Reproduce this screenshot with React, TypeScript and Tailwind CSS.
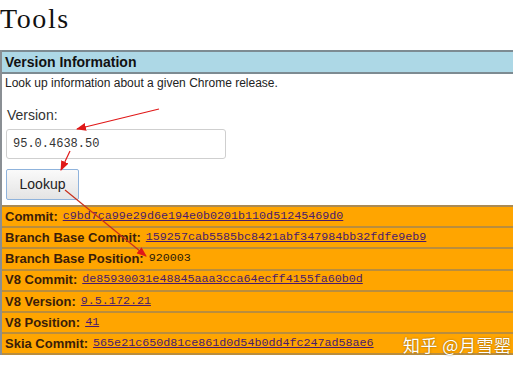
import React from "react";

const rows: { label: string; value: string; link: boolean }[] = [
  { label: "Commit:", value: "c9bd7ca99e29d6e194e0b0201b110d51245469d0", link: true },
  { label: "Branch Base Commit:", value: "159257cab5585bc8421abf347984bb32fdfe9eb9", link: true },
  { label: "Branch Base Position:", value: "920003", link: false },
  { label: "V8 Commit:", value: "de85930031e48845aaa3cca64ecff4155fa60b0d", link: true },
  { label: "V8 Version:", value: "9.5.172.21", link: true },
  { label: "V8 Position:", value: "41", link: true },
  { label: "Skia Commit:", value: "565e21c650d81ce861d0d54b0dd4fc247ad58ae6", link: true },
];

const mono = { fontFamily: '"Liberation Mono", "Courier New", monospace' };
const sans = { fontFamily: '"Liberation Sans", Arial, sans-serif' };

export default function App() {
  return (
    <div className="relative w-[513px] h-[366px] bg-white overflow-hidden" style={sans}>
      <h1
        className="h-[50px] pt-[3px] pl-0 text-[28px] leading-[32px] text-[#111] tracking-[1.6px]"
        style={{ fontFamily: '"Liberation Serif", "Times New Roman", serif' }}
      >
        Tools
      </h1>
      <div className="border-l-2 border-[#8a8f94]">
        <div className="h-[24px] bg-[#add8e6] border-y-2 border-[#7d8b92] pl-[3px] flex items-center text-[14px] font-bold text-[#111]">
          Version Information
        </div>
        <div className="pl-[3px] pt-[2px] text-[12px] leading-[14px] text-[#222]">
          Look up information about a given Chrome release.
        </div>
        <div className="pl-[5px] pt-[17px] text-[14px] leading-[16px] text-[#333]">Version:</div>
        <div className="pl-[4px] pt-[6px]">
          <div
            className="w-[220px] h-[30px] border border-[#cfcfcf] rounded-[3px] flex items-center pl-[6px] text-[12px] text-[#333]"
            style={mono}
          >
            95.0.4638.50
          </div>
        </div>
        <div className="pl-[4px] pt-[10px] pb-[5px]">
          <div className="w-[73px] h-[31px] border border-[#8fb3dc] rounded-[2px] bg-gradient-to-b from-[#fafafa] to-[#e4e4e4] flex items-center justify-center text-[14px] text-[#222]">
            Lookup
          </div>
        </div>
        <div className="border-t-2 border-[#a98a55]">
          {rows.map((r) => (
            <div
              key={r.label}
              className="h-[21.2px] bg-[#ffa500] border-b-2 border-[#b98d3e] flex items-center pl-[3px] text-[13px] whitespace-nowrap"
            >
              <span className="font-bold text-[#3a1d0a]">{r.label}</span>
              <span
                className={
                  "ml-[5px] text-[11.7px] " +
                  (r.link ? "underline text-[#4a1a6b]" : "text-[#2a1a0a]")
                }
                style={mono}
              >
                {r.value}
              </span>
            </div>
          ))}
        </div>
      </div>

      <div
        className="absolute left-[403px] top-[332px] text-[17px] text-white tracking-[0.5px]"
        style={{
          fontFamily: '"Noto Sans CJK SC", "Noto Sans", sans-serif',
          textShadow: "0 0 2px rgba(80,60,20,0.7)",
        }}
      >
        知乎 @月雪罂
      </div>

      <svg className="absolute left-0 top-0 pointer-events-none" width="513" height="366">
        <defs>
          <marker id="ah" markerWidth="10" markerHeight="8" refX="9" refY="4" orient="auto" markerUnits="userSpaceOnUse">
            <path d="M0,0 L10,4 L0,8 Z" fill="#e01818" />
          </marker>
        </defs>
        <line x1="159" y1="109" x2="77" y2="129" stroke="#e01818" strokeWidth="1.2" markerEnd="url(#ah)" />
        <line x1="70" y1="151" x2="61" y2="170" stroke="#e01818" strokeWidth="1.2" markerEnd="url(#ah)" />
        <line x1="65" y1="190" x2="146" y2="256" stroke="#c8301c" strokeWidth="1.2" markerEnd="url(#ah)" />
      </svg>
    </div>
  );
}
